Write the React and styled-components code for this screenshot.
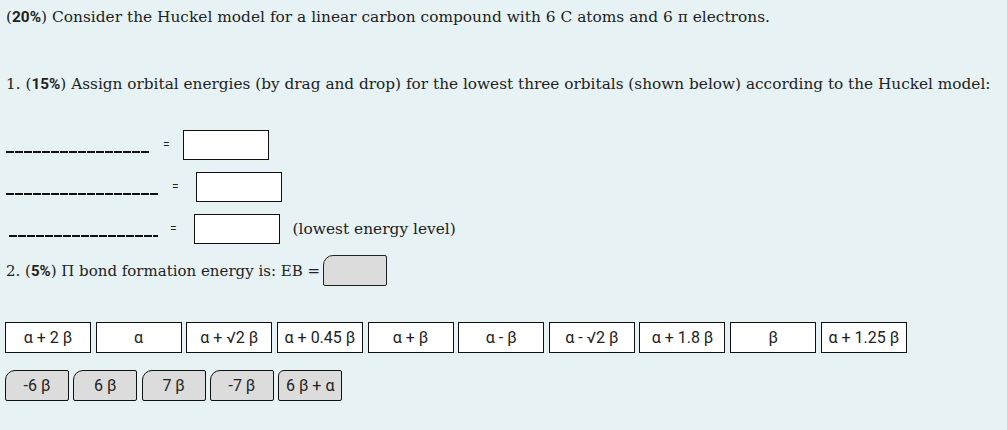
import React from "react";
import styled, { createGlobalStyle } from "styled-components";

const GlobalStyle = createGlobalStyle`
body{
  margin: 0;
  background: #e7f2f5;
  font-family: "DejaVu Serif", serif;
  color: #222;
}
`;

const Page = styled.div`
padding: 5px 5px 0 5px;
min-height: 425px;
`;

const Para = styled.p`
margin: 0;
font-size: ${({size})=> size || 15.4}px;
line-height: 24px;
padding-left: 1px;
white-space: nowrap;
`;

const Intro = styled(Para)`
margin-bottom: 43px;
`;

const Bold = styled.b`
font-family: Roboto, "Liberation Sans", sans-serif;
font-weight: 700;
`;

const Blanks = styled.div`
display: flex;
flex-direction: column;
gap: 12px;
margin-top: 34px;
`;

const Row = styled.div`
display: flex;
align-items: center;
height: 30px;
`;

const Dashes = styled.span`
width: ${({w})=> w}px;
margin-left: ${({off})=> off || 1}px;
height: 2px;
align-self: flex-end;
margin-bottom: 7px;
background: repeating-linear-gradient(
  to right, #111 0 8px, transparent 8px 9px
);
`;

const Eq = styled.span`
font-family: Roboto, "Liberation Sans", sans-serif;
font-size: 12px;
margin-left: ${({gap})=> gap}px;
margin-right: ${({after})=> after}px;
`;

const Drop = styled.div`
width: 84px;
height: 28px;
background: white;
border: 1px solid #111;
`;

const Note = styled.span`
font-size: 15.4px;
margin-left: 13px;
`;

const Energy = styled.div`
display: flex;
align-items: center;
margin-top: 11px;
`;

const GrayDrop = styled.div`
width: 62px;
height: 29px;
margin-left: 3px;
background: #dcdcdc;
border: 1px solid #222;
border-radius: 10px 2px 2px 2px;
`;

const Bank = styled.div`
display: flex;
gap: ${({gray})=> gray ? 4.3 : 4.65}px;
margin-top: ${({top})=> top}px;
`;

const Choice = styled.div`
box-sizing: border-box;
width: ${({gray})=> gray ? 64 : 86}px;
height: 31px;
display: flex;
align-items: center;
justify-content: center;
background: ${({gray})=> gray ? "#dcdcdc" : "white"};
border: 1px solid #111;
border-radius: ${({gray, round})=> gray ? (round ? "10px 2px 2px 2px" : "6px 2px 2px 2px") : "0"};
font-family: Roboto, "Liberation Sans", sans-serif;
font-size: 16px;
color: #222;
white-space: nowrap;
`;

const choices = [
  "α + 2 β", "α", "α + √2 β", "α + 0.45 β", "α + β",
  "α - β", "α - √2 β", "α + 1.8 β", "β", "α + 1.25 β",
];

const answers = ["-6 β", "6 β", "7 β", "-7 β", "6 β + α"];

const App = () => {
  return (
    <Page>
      <GlobalStyle />
      <Intro>
        (<Bold>20%</Bold>) Consider the Huckel model for a linear carbon compound with 6 C atoms and 6 π electrons.
      </Intro>
      <Para size={15.3}>
        1. (<Bold>15%</Bold>) Assign orbital energies (by drag and drop) for the lowest three orbitals (shown below) according to the Huckel model:
      </Para>
      <Blanks>
        <Row>
          <Dashes w={144} />
          <Eq gap={13} after={13}>=</Eq>
          <Drop />
        </Row>
        <Row>
          <Dashes w={153} />
          <Eq gap={13} after={17}>=</Eq>
          <Drop />
        </Row>
        <Row>
          <Dashes w={149} off={4} />
          <Eq gap={12} after={17}>=</Eq>
          <Drop />
          <Note>(lowest energy level)</Note>
        </Row>
      </Blanks>
      <Energy>
        <Para size={15}>2. (<Bold>5%</Bold>) Π bond formation energy is: EB =</Para>
        <GrayDrop />
      </Energy>
      <Bank top={36}>
        {choices.map((c) => <Choice key={c}>{c}</Choice>)}
      </Bank>
      <Bank top={17} gray>
        {answers.map((a, i) => <Choice key={a} gray round={i < 4}>{a}</Choice>)}
      </Bank>
    </Page>
  );
};

export default App;
